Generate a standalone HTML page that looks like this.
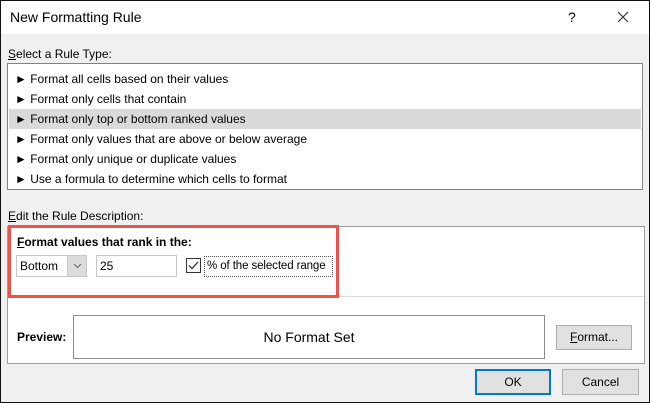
<html><head><style>
*{box-sizing:border-box}
body{margin:0;width:650px;height:403px;overflow:hidden;font-family:"Liberation Sans",sans-serif;font-size:12px;color:#000}
.win{position:absolute;left:0;top:0;width:650px;height:403px;border:1px solid #111;background:#f0f0f0}
.abs{position:absolute;white-space:nowrap}
.row{position:absolute;left:1px;width:632px;height:20px;line-height:20px;padding-left:6px;font-size:12px}
.btn{position:absolute;background:#e1e1e1;border:1px solid #adadad;text-align:center;font-size:12px}
</style></head><body><div class="win">
<div class="abs" style="left:0;top:0;width:648px;height:33px;background:#fff"></div>
<div class="abs" style="left:9px;top:8px;font-size:14px">New Formatting Rule</div>
<div class="abs" style="left:567px;top:8px;font-size:14px">?</div>
<svg class="abs" style="left:616px;top:10px" width="12" height="12"><path d="M1 1L11 11M11 1L1 11" stroke="#333" stroke-width="1.2"/></svg>
<div class="abs" style="left:7px;top:46px"><u>S</u>elect a Rule Type:</div>
<div class="abs" style="left:6px;top:62px;width:636px;height:127px;background:#fff;border:1px solid #828282">
<div class="row" style="top:5px">► Format all cells based on their values</div>
<div class="row" style="top:25px">► Format only cells that contain</div>
<div class="row" style="top:45px;background:#dadada">► Format only top or bottom ranked values</div>
<div class="row" style="top:65px">► Format only values that are above or below average</div>
<div class="row" style="top:85px">► Format only unique or duplicate values</div>
<div class="row" style="top:105px">► Use a formula to determine which cells to format</div>
</div>
<div class="abs" style="left:7px;top:208px"><u>E</u>dit the Rule Description:</div>
<div class="abs" style="left:6px;top:225px;width:638px;height:138px;background:#fff;border:1px solid #a0a0a0"></div>
<div class="abs" style="left:7px;top:295px;width:636px;height:1px;background:#ddd"></div>
<div class="abs" style="left:7px;top:224px;width:331px;height:73px;border:3px solid #f0514a"></div>
<div class="abs" style="left:16px;top:234px;font-weight:bold"><u>F</u>ormat values that rank in the:</div>
<div class="abs" style="left:15px;top:254px;width:71px;height:22px;border:1px solid #c8c8c8;background:#fff"><span style="position:absolute;left:3px;top:3px">Bottom</span><div class="abs" style="left:50px;top:0;width:19px;height:20px;background:#dcdcdc;border-left:1px solid #c8c8c8"><svg width="19" height="20"><path d="M6 8L9.5 11.5L13 8" stroke="#666" fill="none"/></svg></div></div>
<div class="abs" style="left:95px;top:254px;width:81px;height:22px;border:1px solid #c8c8c8;background:#fff"><span style="position:absolute;left:3px;top:3px">25</span></div>
<div class="abs" style="left:185px;top:257px;width:15px;height:15px;border:1px solid #333;background:#fff"><svg width="13" height="13" style="display:block"><path d="M2 6.5L5 9.5L11 3" stroke="#222" fill="none" stroke-width="1.2"/></svg></div>
<div class="abs" style="left:203px;top:255px;width:129px;height:21px;border:1px dotted #555;line-height:19px;padding-left:2px;font-size:11.5px;letter-spacing:-0.1px">% of the selected range</div>
<div class="abs" style="left:16px;top:329px;font-weight:bold">Preview:</div>
<div class="abs" style="left:72px;top:314px;width:472px;height:44px;border:1px solid #8a8a8a;background:#fff;text-align:center;line-height:42px;font-size:14px">No Format Set</div>
<div class="btn" style="left:555px;top:324px;width:76px;height:25px;line-height:23px"><u>F</u>ormat...</div>
<div class="btn" style="left:474px;top:368px;width:76px;height:26px;border:2px solid #0078d7;line-height:22px">OK</div>
<div class="btn" style="left:561px;top:368px;width:77px;height:26px;line-height:24px">Cancel</div>
</div></body></html>
